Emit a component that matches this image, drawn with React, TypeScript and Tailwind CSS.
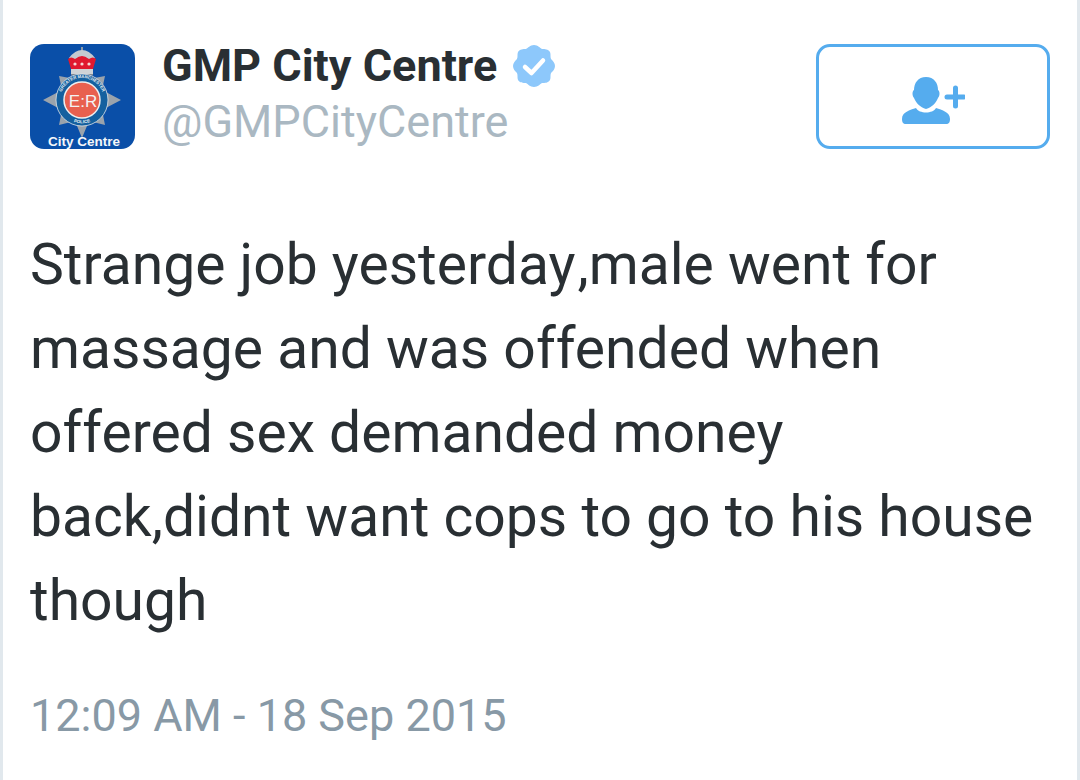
const Badge = () => (
  <svg viewBox="0 0 105 105" className="w-[105px] h-[105px] rounded-[14px] bg-[#0a4fa8] shrink-0">
    <defs>
      <path id="ring-top" d="M30 56 A22 22 0 0 1 74 56" />
      <path id="ring-bottom" d="M33 70 A24 24 0 0 0 71 70" />
    </defs>
    <path d="M52 24 L59 35 L75 32 L72 46 L91 56 L72 66 L75 81 L59 77 L52 94 L45 77 L29 81 L32 66 L13 56 L32 46 L29 32 L45 35 Z" fill="#9aa3ac" />
    <rect x="51" y="3" width="2" height="8" fill="#8f9aa6" />
    <path d="M39 14 Q45 6 52 6 Q59 6 65 14 L62 18 L42 18 Z" fill="#c4c9cf" />
    <path d="M38 15 Q41 12 45 15 Q49 12 52 12 Q55 12 59 15 Q63 12 66 15 L63 25 L41 25 Z" fill="#e0182f" />
    <circle cx="45" cy="20" r="1.600" fill="#f6d6d6" />
    <circle cx="52" cy="20" r="1.600" fill="#f6d6d6" />
    <circle cx="59" cy="20" r="1.600" fill="#f6d6d6" />
    <rect x="41" y="25" width="22" height="5" fill="#cfd3d6" />
    <rect x="41" y="30" width="22" height="1.500" fill="#7d8894" />
    <circle cx="52" cy="56" r="26" fill="#14609f" stroke="#dfe5ea" strokeWidth="0.800" />
    <circle cx="52" cy="56" r="18" fill="#e8604f" stroke="#eceef0" strokeWidth="1.500" />
    <text fontSize="4.300" fontWeight="700" fill="#e8eef3" fontFamily="Liberation Sans, sans-serif">
      <textPath href="#ring-top" startOffset="50%" textAnchor="middle">GREATER MANCHESTER</textPath>
    </text>
    <text fontSize="4.500" fontWeight="700" fill="#e8eef3" fontFamily="Liberation Sans, sans-serif">
      <textPath href="#ring-bottom" startOffset="50%" textAnchor="middle">POLICE</textPath>
    </text>
    <text x="53" y="63" textAnchor="middle" fontSize="17" fill="#f3f3f3" fontFamily="Liberation Sans, sans-serif">E:R</text>
    <text x="54" y="102" textAnchor="middle" fontSize="13.500" fontWeight="700" fill="#f4f7fa" fontFamily="Liberation Sans, sans-serif">City Centre</text>
  </svg>
)

const Verified = () => (
  <svg viewBox="0 0 42 42" className="w-[42px] h-[42px] shrink-0 ml-[16px]">
    <path d="M21 0 C25 0 27 3 29 4 C32 4 35 4 37 7 C38 9 37 12 38 14 C40 16 42 18 42 21 C42 24 40 26 38 28 C37 30 38 33 37 35 C35 38 32 38 29 38 C27 39 25 42 21 42 C17 42 15 39 13 38 C10 38 7 38 5 35 C4 33 5 30 4 28 C2 26 0 24 0 21 C0 18 2 16 4 14 C5 12 4 9 5 7 C7 4 10 4 13 4 C15 3 17 0 21 0 Z" fill="#8dc8fb" />
    <path d="M12 22 L18.500 28 L30 15.500" fill="none" stroke="#fff" strokeWidth="4.500" strokeLinecap="round" strokeLinejoin="round" />
  </svg>
)

const FollowIcon = () => (
  <svg viewBox="0 0 64 50" className="w-[64px] h-[50px] mt-[10px]">
    <path d="M25 0 C33 0 37 6 37 13 C39 14 39 19 37 21 C35 26 31 30 25 32 C19 30 15 26 13 21 C11 19 11 14 13 13 C13 6 17 0 25 0 Z" fill="#55acee" />
    <path d="M15 31 C18 37 32 37 35 31 C41 33 49 35 49 42 C49 45 48 47 45 47 L5 47 C2 47 1 45 1 42 C1 35 9 33 15 31 Z" fill="#55acee" />
    <path d="M46 20 L63 20 M54.500 11 L54.500 29" fill="none" stroke="#55acee" strokeWidth="5" strokeLinecap="round" />
  </svg>
)

export default function App() {
  return (
    <div className="w-[1080px] h-[780px] overflow-hidden bg-white border-x-[3px] border-[#e1e8ed] font-['Roboto',sans-serif]">
      <div className="pl-[27px] pr-[27px] pt-[44px]">
        <div className="flex items-start">
          <Badge />
          <div className="ml-[27px] flex flex-col">
            <div className="flex items-center h-[44px]">
              <span className="text-[45px] leading-[44px] font-bold text-[#292f33]">GMP City Centre</span>
              <Verified />
            </div>
            <span className="mt-[8px] text-[45px] leading-[52px] text-[#aab8c2]">@GMPCityCentre</span>
          </div>
          <button className="ml-auto w-[234px] h-[105px] rounded-[14px] border-[3px] border-[#55acee] flex items-center justify-center">
            <FollowIcon />
          </button>
        </div>
        <p className="mt-[74px] text-[57px] leading-[84px] text-[#292f33] whitespace-pre-line">
          Strange job yesterday<span className="ml-[2px]">,male went for</span>
          {"\nmassage and was offended when\noffered sex demanded money\nback,didnt want cops to go to his house\nthough"}
        </p>
        <div className="mt-[47px] text-[45px] leading-[52px] text-[#8899a6]">12:09 AM - 18 Sep 2015</div>
      </div>
    </div>
  )
}
